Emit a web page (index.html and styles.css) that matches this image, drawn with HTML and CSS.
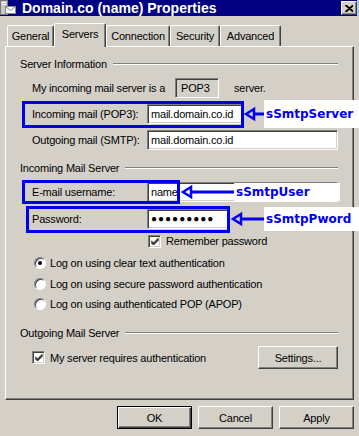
FILE: index.html
```html
<!DOCTYPE html>
<html lang="en">
<head>
  <meta charset="UTF-8">
  <meta name="viewport" content="width=device-width, initial-scale=1.0">
  <title>Domain.co (name) Properties</title>
  <link rel="stylesheet" href="styles.css">
</head>
<body>
  <div class="titlebar">
    <svg class="app-icon" viewBox="0 0 16 16" width="16" height="16">
      <rect x="0.5" y="0.5" width="7" height="14" fill="#c8c8c8" stroke="#7a7a7a"/>
      <rect x="2" y="2" width="4" height="1" fill="#fff"/>
      <rect x="2" y="4" width="4" height="1" fill="#fff"/>
      <rect x="5.5" y="6.5" width="10" height="7" fill="#fff" stroke="#8a8a8a"/>
      <path d="M5.5 6.5 L10.5 10.5 L15.5 6.5" fill="none" stroke="#8a8a8a"/>
    </svg>
    <span class="title">Domain.co (name) Properties</span>
    <span class="close">
      <svg viewBox="0 0 8 7" width="8" height="7">
        <path d="M0 0 L8 7 M1 0 L8 6 M0 7 L8 0 M1 7 L8 1" stroke="#000" stroke-width="1.2"/>
      </svg>
    </span>
  </div>

  <div class="tabs">
    <div class="tab tab-general">General</div>
    <div class="tab tab-servers active">Servers</div>
    <div class="tab tab-connection">Connection</div>
    <div class="tab tab-security">Security</div>
    <div class="tab tab-advanced">Advanced</div>
  </div>

  <div class="panel">
    <div class="group-title">Server Information</div>

    <div class="row row-type">
      <span class="type-label">My incoming mail server is a</span>
      <span class="field readonly">POP3</span>
      <span class="type-after">server.</span>
    </div>

    <div class="row row-incoming">
      <span class="label">Incoming mail (POP3):</span>
      <span class="field">mail.domain.co.id</span>
      <span class="mark mark-server"></span>
      <span class="callout callout-server">
        <svg class="arrow" viewBox="0 0 20 28" width="20" height="28">
          <path d="M2 14 L10 9 L10 19 Z" fill="none" stroke="#0000f0" stroke-width="2.5"/>
          <path d="M10 14 H20" stroke="#0000f0" stroke-width="3"/>
        </svg>
        <span class="tag">sSmtpServer</span>
      </span>
    </div>

    <div class="row row-outgoing">
      <span class="label">Outgoing mail (SMTP):</span>
      <span class="field">mail.domain.co.id</span>
    </div>

    <div class="group-title group-incoming">Incoming Mail Server</div>

    <div class="row row-user">
      <span class="label">E-mail username:</span>
      <span class="field">name</span>
      <span class="mark mark-user"></span>
      <span class="callout callout-user">
        <svg class="arrow" viewBox="0 0 53 18" width="53" height="18">
          <path d="M2 9 L10 4 L10 14 Z" fill="none" stroke="#0000f0" stroke-width="2.5"/>
          <path d="M10 9 H53" stroke="#0000f0" stroke-width="3"/>
        </svg>
        <span class="tag">sSmtpUser</span>
      </span>
    </div>

    <div class="row row-pass">
      <span class="label">Password:</span>
      <span class="field password">&#9679;&#9679;&#9679;&#9679;&#9679;&#9679;&#9679;&#9679;&#9679;</span>
      <span class="mark mark-pass"></span>
      <span class="callout callout-pass">
        <svg class="arrow" viewBox="0 0 34 24" width="34" height="24">
          <path d="M3 12 L11 7 L11 17 Z" fill="none" stroke="#0000f0" stroke-width="2.5"/>
          <path d="M11 12 H34" stroke="#0000f0" stroke-width="3"/>
        </svg>
        <span class="tag">sSmtpPword</span>
      </span>
    </div>

    <div class="row row-remember">
      <span class="check">
        <svg viewBox="0 0 8 7" width="8" height="7"><path d="M0 2.5 L2.5 5 L7.5 0 M0 3.5 L2.5 6 L7.5 1 M0 4.5 L2.5 7 L7.5 2" fill="none" stroke="#000" stroke-width="1"/></svg>
      </span>
      <span class="check-text">Remember password</span>
    </div>

    <div class="row row-radio radio-1">
      <span class="radio checked"></span>
      <span class="radio-text">Log on using clear text authentication</span>
    </div>
    <div class="row row-radio radio-2">
      <span class="radio"></span>
      <span class="radio-text">Log on using secure password authentication</span>
    </div>
    <div class="row row-radio radio-3">
      <span class="radio"></span>
      <span class="radio-text">Log on using authenticated POP (APOP)</span>
    </div>

    <div class="group-title group-outgoing">Outgoing Mail Server</div>

    <div class="row row-auth">
      <span class="check">
        <svg viewBox="0 0 8 7" width="8" height="7"><path d="M0 2.5 L2.5 5 L7.5 0 M0 3.5 L2.5 6 L7.5 1 M0 4.5 L2.5 7 L7.5 2" fill="none" stroke="#000" stroke-width="1"/></svg>
      </span>
      <span class="check-text">My server requires authentication</span>
      <span class="btn btn-settings">Settings...</span>
    </div>
  </div>

  <div class="buttons">
    <span class="btn default">OK</span>
    <span class="btn">Cancel</span>
    <span class="btn">Apply</span>
  </div>
</body>
</html>
```

FILE: styles.css
```css
body {
  margin: 0;
  background-color: #d4d0c8;
  font-family: "Liberation Sans", Arial, sans-serif;
  font-size: 11px;
  letter-spacing: -0.2px;
  color: #000;
  overflow: hidden;
}

/* title bar */
.titlebar {
  height: 16px;
  display: flex;
  align-items: center;
  padding-right: 2px;
  background: linear-gradient(90deg, #000080 calc(100% - 2px), #a6caf0 0);
}

.app-icon {
  flex: none;
}

.title {
  margin-left: 6px;
  color: #fff;
  font-weight: bold;
  font-size: 14px;
  letter-spacing: 0;
}

.close {
  margin-left: auto;
  width: 16px;
  height: 14px;
  box-sizing: border-box;
  display: flex;
  align-items: center;
  justify-content: center;
  background-color: #d4d0c8;
  border: 1px solid;
  border-color: #fff #404040 #404040 #fff;
  box-shadow: inset -1px -1px #808080;
}

/* tabs */
.tabs {
  display: flex;
  align-items: flex-end;
  height: 23px;
  margin-top: 7px;
  padding-left: 7px;
}

.tab {
  height: 21px;
  box-sizing: border-box;
  border: 1px solid;
  border-bottom: none;
  border-color: #fff #404040 transparent #fff;
  border-radius: 2px 2px 0 0;
  box-shadow: inset -1px 0 #808080;
  text-align: center;
  line-height: 21px;
}

.tab-general { width: 47px; }
.tab-servers { width: 52px; }
.tab-connection { width: 64px; }
.tab-security { width: 50px; }
.tab-advanced { width: 61px; }

.tab.active {
  height: 24px;
  margin-bottom: -1px;
  line-height: 20px;
  background-color: #d4d0c8;
  position: relative;
  z-index: 1;
}

/* panel */
.panel {
  margin: 0 5px;
  height: 354px;
  box-sizing: border-box;
  padding-top: 8px;
  border: 1px solid;
  border-color: #fff #404040 #404040 #fff;
  box-shadow: inset -1px -1px #808080;
}

.group-title {
  display: flex;
  align-items: center;
  height: 18px;
  padding: 0 15px 0 14px;
}

.group-title::after {
  content: "";
  flex: 1;
  margin-left: 6px;
  border-top: 1px solid #808080;
  border-bottom: 1px solid #fff;
}

.group-incoming { margin-top: 9px; }
.group-outgoing { margin-top: 12px; }

.row {
  display: flex;
  align-items: center;
  height: 20px;
  padding-left: 26px;
  position: relative;
}

.row-type { margin-top: 5px; }
.row-incoming { margin-top: 6px; }
.row-outgoing { margin-top: 6px; }
.row-user { margin-top: 5px; }
.row-pass { margin-top: 7px; }

.label {
  width: 115px;
}

.type-label {
  width: 143px;
}

.type-after {
  margin-left: 15px;
}

.field {
  width: 191px;
  height: 20px;
  box-sizing: border-box;
  padding: 0 3px;
  line-height: 18px;
  background-color: #fff;
  border: 1px solid;
  border-color: #808080 #fff #fff #808080;
  box-shadow: inset 1px 1px #404040, inset -1px -1px #d4d0c8;
  white-space: nowrap;
  overflow: hidden;
}

.field.readonly {
  width: 44px;
  padding-left: 5px;
  background-color: #d4d0c8;
}

.field.password {
  font-size: 10px;
  letter-spacing: 1px;
}

/* annotations drawn over the dialog */
.mark {
  position: absolute;
  box-sizing: border-box;
  border: 3px solid #0000f0;
}

.mark-server { left: 16px; top: -3px; width: 222px; height: 27px; }
.mark-user { left: 16px; top: -2px; width: 158px; height: 24px; }
.mark-pass { left: 20px; top: -3px; width: 204px; height: 27px; }

.callout {
  position: absolute;
  display: flex;
}

.callout-server { left: 238px; top: -4px; height: 28px; }
.callout-user { left: 175px; top: 1px; height: 18px; }
.callout-pass { left: 224px; top: -2px; height: 24px; }

.callout-server .arrow,
.callout-pass .arrow {
  background-color: #d4d0c8;
}

.tag {
  background-color: #fff;
  color: #0000f0;
  font-family: "DejaVu Sans", Verdana, sans-serif;
  font-weight: bold;
  font-size: 12px;
  letter-spacing: 0;
  padding-left: 2px;
  display: flex;
  align-items: center;
}

.callout-server .tag,
.callout-pass .tag { width: 95px; }
.callout-user .tag { width: 104px; }

/* check boxes and radios */
.check {
  width: 13px;
  height: 13px;
  box-sizing: border-box;
  display: flex;
  align-items: center;
  justify-content: center;
  background-color: #fff;
  border: 1px solid;
  border-color: #808080 #fff #fff #808080;
  box-shadow: inset 1px 1px #404040, inset -1px -1px #d4d0c8;
}

.row-remember {
  height: 16px;
  margin-top: 4px;
  padding-left: 142px;
}

.check-text {
  margin-left: 5px;
}

.row-radio {
  height: 16px;
  padding-left: 28px;
}

.radio-1 { margin-top: 6px; }
.radio-2 { margin-top: 5px; }
.radio-3 { margin-top: 4px; }

.radio {
  width: 12px;
  height: 12px;
  box-sizing: border-box;
  border-radius: 50%;
  background-color: #fff;
  border: 1px solid;
  border-color: #808080 #fff #fff #808080;
  box-shadow: inset 1px 1px #404040;
  display: flex;
  align-items: center;
  justify-content: center;
}

.radio.checked::after {
  content: "";
  width: 4px;
  height: 4px;
  border-radius: 50%;
  background-color: #000;
}

.radio-text {
  margin-left: 4px;
}

.row-auth {
  height: 23px;
  margin-top: 4px;
  padding-right: 15px;
}

/* buttons */
.btn {
  width: 75px;
  height: 23px;
  box-sizing: border-box;
  display: flex;
  align-items: center;
  justify-content: center;
  background-color: #d4d0c8;
  border: 1px solid;
  border-color: #fff #404040 #404040 #fff;
  box-shadow: inset -1px -1px #808080;
}

.btn.default {
  border-color: #000;
  box-shadow: inset 1px 1px #fff, inset -1px -1px #404040, inset -2px -2px #808080;
}

.btn-settings {
  width: 80px;
  margin-left: auto;
}

.buttons {
  display: flex;
  justify-content: flex-end;
  gap: 6px;
  margin-top: 6px;
  padding-right: 5px;
}
```
